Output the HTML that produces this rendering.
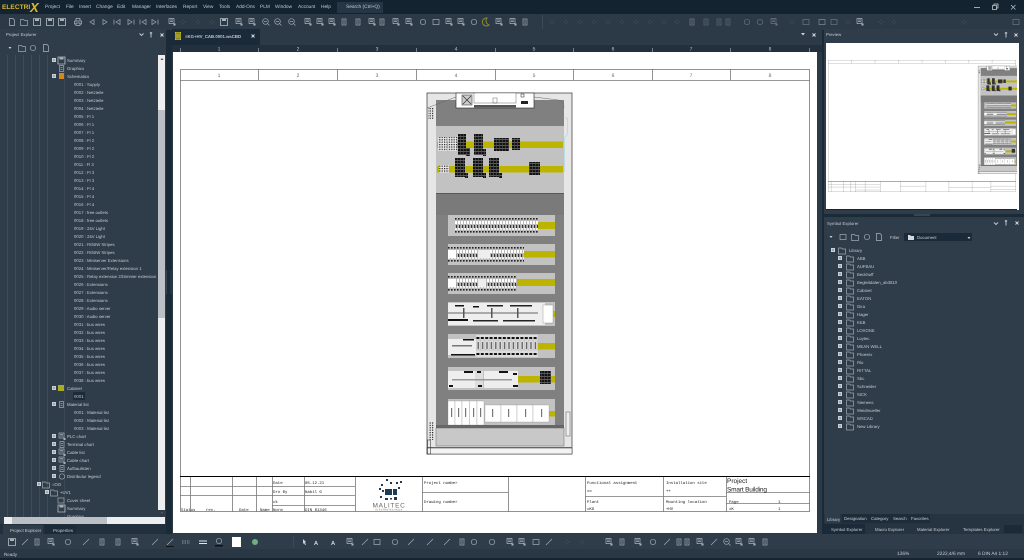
<!DOCTYPE html>
<html><head><meta charset="utf-8"><title>ELECTRIX</title>
<style>
html,body{margin:0;padding:0;width:1024px;height:560px;overflow:hidden;background:#1b2a37}
body{position:relative;font-family:"Liberation Sans",sans-serif;color:#c2c9d0;text-rendering:geometricPrecision}
.a{position:absolute}
.r{position:absolute;white-space:nowrap;font-size:4.3px;line-height:8px;height:8px;margin-top:1px}
.m{position:absolute;white-space:nowrap;font-size:4.8px;line-height:8px;height:8px;color:#c2c9d0;margin-top:1px}
.col{margin-top:1px}
.col div{white-space:nowrap;height:8px;line-height:8px;font-size:4.25px}
svg{position:absolute;left:0;top:0}
.tb text{font-family:"Liberation Mono",monospace;font-size:4px;fill:#222}
</style></head>
<body>
<div class="a" style="left:0;top:0;width:1024px;height:14px;background:#13232f"></div>
<div class="a" style="left:0;top:14px;width:1024px;height:16px;background:#2c3a47"></div>
<div class="a" style="left:0;top:29px;width:166px;height:505px;background:#2f3c49"></div>
<div class="a" style="left:172px;top:29px;width:650px;height:16px;background:#2c3a47"></div>
<div class="a" style="left:172px;top:29px;width:88px;height:16px;background:#1a2a38"></div>
<div class="a" style="left:172px;top:45px;width:650px;height:7px;background:#22303d"></div>
<div class="a" style="left:172px;top:52px;width:650px;height:482px;background:#2c3a47"></div>
<div class="a" style="left:173px;top:52px;width:644px;height:481px;background:#fff"></div>
<div class="a" style="left:824px;top:29px;width:200px;height:185px;background:#2f3c49"></div>
<div class="a" style="left:826px;top:43px;width:193px;height:167px;background:#fff"></div>
<div class="a" style="left:824px;top:217px;width:200px;height:297px;background:#2f3c49"></div>
<div class="a" style="left:824px;top:514px;width:200px;height:20px;background:#263441"></div>
<div class="a" style="left:0;top:534px;width:1024px;height:15px;background:#2f3d4b"></div>
<div class="a" style="left:0;top:549px;width:1024px;height:9px;background:#2a3846"></div>
<div class="a" style="left:0;top:558px;width:1024px;height:2px;background:#15242f"></div>

<div class="a" style="left:2px;top:0;height:14px;font:bold 6.6px/15px 'Liberation Sans',sans-serif;color:#d8b62c;white-space:nowrap">ELECTRI</div>
<div class="a" style="left:30px;top:0;font:italic bold 13px/15px 'Liberation Sans',sans-serif;color:#e2b52a">X</div>

<div class="m" style="left:45px;top:3px">Project</div><div class="m" style="left:66px;top:3px">File</div><div class="m" style="left:79px;top:3px">Insert</div><div class="m" style="left:96px;top:3px">Change</div><div class="m" style="left:117px;top:3px">Edit</div><div class="m" style="left:132px;top:3px">Manager</div><div class="m" style="left:156px;top:3px">Interfaces</div><div class="m" style="left:183px;top:3px">Report</div><div class="m" style="left:203px;top:3px">View</div><div class="m" style="left:219px;top:3px">Tools</div><div class="m" style="left:236px;top:3px">Add-Ons</div><div class="m" style="left:260px;top:3px">PLM</div><div class="m" style="left:275px;top:3px">Window</div><div class="m" style="left:298px;top:3px">Account</div><div class="m" style="left:321px;top:3px">Help</div>
<div class="a" style="left:337px;top:2px;width:46px;height:11px;background:#263644"></div>
<div class="m" style="left:346px;top:3px">Search (Ctrl+Q)</div>

<div class="m" style="left:6px;top:30px;font-size:4.3px">Project Explorer</div>
<div class="m" style="left:826px;top:30px;font-size:4.3px">Preview</div>
<div class="m" style="left:827px;top:219px;font-size:4.3px">Symbol Explorer</div>
<div class="m" style="left:185px;top:32px;font-weight:bold;font-size:4.3px">=KG+HV_CAB.0001.wsCBD</div>

<div class="a" style="left:7px;top:55px;width:1px;height:462px;background:#3e4b58;box-shadow:8px 0 #3e4b58,16px 0 #3e4b58,24px 0 #3e4b58,32px 0 #3e4b58,40px 0 #3e4b58,57px 0 #3a4754"></div>
<div class="a" style="left:73px;top:392px;width:12px;height:8px;background:#1d2b38"></div>

<div class="r" style="left:67px;top:56px">Summary</div>
<div class="r" style="left:67px;top:64px">Graphics</div>
<div class="r" style="left:67px;top:72px">Schematics</div>
<div class="col a" style="left:74px;top:80px">
<div>0001 : Supply</div><div>0002 : Netzteile</div><div>0003 : Netzteile</div><div>0004 : Netzteile</div><div>0005 : Fl 1</div><div>0006 : Fl 1</div><div>0007 : Fl 1</div><div>0008 : Fl 2</div><div>0009 : Fl 2</div><div>0010 : Fl 2</div><div>0011 : Fl 3</div><div>0012 : Fl 3</div><div>0013 : Fl 3</div><div>0014 : Fl 4</div><div>0015 : Fl 4</div><div>0016 : Fl 4</div><div>0017 : free outlets</div><div>0018 : free outlets</div><div>0019 : 24V Light</div><div>0020 : 24V Light</div><div>0021 : RGBW Stripes</div><div>0022 : RGBW Stripes</div><div>0023 : Miniserver Extensions</div><div>0024 : Miniserver/Relay extension 1</div><div>0025 : Relay extension 2/Dimmer extension</div><div>0026 : Extensions</div><div>0027 : Extensions</div><div>0028 : Extensions</div><div>0029 : Audio server</div><div>0030 : Audio server</div><div>0031 : bus wires</div><div>0032 : bus wires</div><div>0033 : bus wires</div><div>0034 : bus wires</div><div>0035 : bus wires</div><div>0036 : bus wires</div><div>0037 : bus wires</div><div>0038 : bus wires</div>
</div>
<div class="r" style="left:67px;top:384px">Cabinet</div>
<div class="r" style="left:74px;top:392px">0001</div>
<div class="r" style="left:67px;top:400px">Material list</div>
<div class="r" style="left:74px;top:408px">0001 : Material list</div>
<div class="r" style="left:74px;top:416px">0002 : Material list</div>
<div class="r" style="left:74px;top:424px">0003 : Material list</div>
<div class="r" style="left:67px;top:432px">PLC chart</div>
<div class="r" style="left:67px;top:440px">Terminal chart</div>
<div class="r" style="left:67px;top:448px">Cable list</div>
<div class="r" style="left:67px;top:456px">Cable chart</div>
<div class="r" style="left:67px;top:464px">Aufbaulisten</div>
<div class="r" style="left:67px;top:472px">Distributor legend</div>
<div class="r" style="left:52px;top:480px">=OG</div>
<div class="r" style="left:60px;top:488px">+UV1</div>
<div class="r" style="left:67px;top:496px">Cover sheet</div>
<div class="r" style="left:67px;top:504px">Summary</div>
<div class="r" style="left:67px;top:512px">Graphics</div>

<div class="a" style="left:158px;top:55px;width:7px;height:469px;background:#eceeef"></div>
<div class="a" style="left:158px;top:110px;width:7px;height:208px;background:#bcc0c4"></div>
<div class="a" style="left:4px;top:517px;width:161px;height:7px;background:#eceeef"></div>
<div class="a" style="left:12px;top:517px;width:95px;height:7px;background:#bcc0c4"></div>
<div class="a" style="left:158px;top:510px;width:7px;height:7px;background:#2f3c49"></div>
<div class="a" style="left:0;top:524px;width:166px;height:10px;background:#22303d"></div>
<div class="a" style="left:3px;top:525px;width:40px;height:9px;background:#2f3c49"></div>
<div class="a" style="left:45px;top:525px;width:31px;height:9px;background:#1c2b38"></div>
<div class="r" style="left:10px;top:526px;font-size:4.4px">Project Explorer</div>
<div class="r" style="left:53px;top:526px;font-size:4.4px">Properties</div>

<div class="col a" style="left:857px;top:254px">
<div>ABB</div><div>AUFBAU</div><div>Beckhoff</div><div>Begleitdaten_ab3810</div><div>Cabinet</div><div>EATON</div><div>Gira</div><div>Hager</div><div>KEB</div><div>LOXONE</div><div>Loytec</div><div>MEAN WELL</div><div>Phoenix</div><div>Rlo</div><div>RITTAL</div><div>Sbc</div><div>Schneider</div><div>SICK</div><div>Siemens</div><div>Weidmueller</div><div>WSCAD</div><div>New Library</div>
</div>
<div class="r" style="left:849px;top:246px">Library</div>
<div class="r" style="left:890px;top:233px">Filter</div>
<div class="a" style="left:904px;top:233px;width:68px;height:8px;background:#1b2a38"></div>
<div class="r" style="left:917px;top:233px">Document</div>

<div class="a" style="left:825px;top:514px;width:15px;height:9px;background:#2f3c49"></div>
<div class="a" style="left:842px;top:514px;width:88px;height:9px;background:#1d2c39"></div>
<div class="r" style="left:827px;top:515px">Library</div>
<div class="r" style="left:844px;top:514px">Designation</div>
<div class="r" style="left:871px;top:514px">Category</div>
<div class="r" style="left:893px;top:514px">Search</div>
<div class="r" style="left:911px;top:514px">Favorites</div>
<div class="a" style="left:824px;top:524px;width:41px;height:10px;background:#1b2a38"></div>
<div class="a" style="left:1004px;top:525px;width:18px;height:8px;background:#1b2a38"></div>
<div class="r" style="left:831px;top:525px">Symbol Explorer</div>
<div class="r" style="left:875px;top:525px">Macro Explorer</div>
<div class="r" style="left:917px;top:525px">Material Explorer</div>
<div class="r" style="left:963px;top:525px">Templates Explorer</div>

<div class="r" style="left:4px;top:550px;font-size:4.5px">Ready</div>
<div class="r" style="left:897px;top:550px;font-size:4.8px">136%</div>
<div class="r" style="left:937px;top:550px;font-size:4.8px">2222,4/6 mm</div>
<div class="r" style="left:978px;top:550px;font-size:4.8px">6 DIN A4 1:12</div>

<svg width="1024" height="560" viewBox="0 0 1024 560">
<defs>
<symbol id="d" viewBox="0 0 8 8" width="8" height="8"><path d="M1.500.5h3.500l1.500 1.500v5.500h-5z" fill="none" stroke="#aeb7be" stroke-width=".7"/></symbol>
<symbol id="f" viewBox="0 0 8 8" width="8" height="8"><path d="M.5 1.500h3l1 1h3v5h-7z" fill="none" stroke="#9fa9b1" stroke-width=".7"/></symbol>
<symbol id="s" viewBox="0 0 8 8" width="8" height="8"><path d="M.5.5h7v7h-7z" fill="none" stroke="#b5bdc4" stroke-width=".8"/><path d="M2 1h4v2H2z" fill="#a9b2b9"/></symbol>
<symbol id="p" viewBox="0 0 8 8" width="8" height="8"><path d="M2 3V.5h4V3M.5 3h7v3H6M2 6H.5V3M2 5h4v2.500H2z" fill="none" stroke="#aeb7be" stroke-width=".7"/></symbol>
<symbol id="l" viewBox="0 0 8 8" width="8" height="8"><path d="M6 1.500L2 4l4 2.500z" fill="none" stroke="#a3acb4" stroke-width=".7"/></symbol>
<symbol id="g" viewBox="0 0 8 8" width="8" height="8"><path d="M2 1.500L6 4 2 6.500z" fill="none" stroke="#a3acb4" stroke-width=".7"/></symbol>
<symbol id="b" viewBox="0 0 8 8" width="8" height="8"><path d="M1 1.500v5M7 1.500L3 4l4 2.500z" fill="none" stroke="#a3acb4" stroke-width=".7"/></symbol>
<symbol id="c" viewBox="0 0 8 8" width="8" height="8"><path d="M7 1.500v5M1 1.500L5 4 1 6.500z" fill="none" stroke="#a3acb4" stroke-width=".7"/></symbol>
<symbol id="z" viewBox="0 0 8 8" width="8" height="8"><circle cx="3.500" cy="3.500" r="2.800" fill="none" stroke="#9fa9b1" stroke-width=".7"/><path d="M5.500 5.500l2 2M2 3.500h3" stroke="#9fa9b1" stroke-width=".7"/></symbol>
<symbol id="r" viewBox="0 0 8 8" width="8" height="8"><path d="M1 .5h5v5H1zM2 2h3M2 3.500h3" fill="none" stroke="#a9b2b9" stroke-width=".7"/><path d="M5.500 5.500h2v2h-2z" fill="#a9b2b9"/></symbol>
<symbol id="i" viewBox="0 0 8 8" width="8" height="8"><path d="M2 1h4v6H2zM3 3h2M3 5h2" fill="none" stroke="#9fa9b1" stroke-width=".7"/></symbol>
<symbol id="h" viewBox="0 0 8 8" width="8" height="8"><path d="M1.500 4h1.500M5 4h1.500M4 1.500V3M4 5v1.500" stroke="#47545f" stroke-width=".7"/></symbol>
<symbol id="e" viewBox="0 0 8 8" width="8" height="8"><path d="M1 1.500h6v5H1z" fill="none" stroke="#9fa9b1" stroke-width=".7"/></symbol>
<symbol id="o" viewBox="0 0 8 8" width="8" height="8"><circle cx="4" cy="4" r="2.700" fill="none" stroke="#9fa9b1" stroke-width=".7"/></symbol>
<symbol id="n" viewBox="0 0 8 8" width="8" height="8"><path d="M1 7L7 1" stroke="#9fa9b1" stroke-width=".7"/></symbol>
<symbol id="x" viewBox="0 0 4 4" width="4" height="4"><rect width="4" height="4" fill="#c9cfd4"/><path d="M1 2h2" stroke="#3a4754" stroke-width=".6"/></symbol>
<symbol id="X" viewBox="0 0 4 4" width="4" height="4"><path d="M.5.5l3 3M3.500.5l-3 3" stroke="#d8dde1" stroke-width=".9"/></symbol>
<pattern id="blk" width="3" height="3" patternUnits="userSpaceOnUse"><rect width="3" height="3" fill="#111"/><rect y="1" width="3" height=".7" fill="#777"/><rect x="1" width=".6" height="3" fill="#555"/></pattern>
<pattern id="chk" width="2.400" height="2.400" patternUnits="userSpaceOnUse"><rect width="2.400" height="2.400" fill="#e8e8e8"/><rect width="1.200" height="1.200" fill="#222"/></pattern>
<pattern id="tm" width="3" height="15" patternUnits="userSpaceOnUse"><rect width="3" height="15" fill="#bbb"/><rect width="1.600" height="1.600" fill="#222"/><rect y="13" width="1.600" height="1.600" fill="#222"/><rect y="3" x="0" width="2" height="3" fill="#fff"/><rect y="7" x="1" width="1.200" height="3" fill="#333"/><rect y="10" x="0" width="2" height="2" fill="#eee"/></pattern>
<pattern id="mod" width="4.400" height="24" patternUnits="userSpaceOnUse"><rect width="4.400" height="24" fill="#ddd"/><rect x=".4" y="2" width="3" height="2" fill="#111"/><rect x=".4" y="18" width="3" height="2" fill="#111"/><rect x="1.600" y="7" width="1.200" height="7" fill="#555"/><rect y="5" width="4.400" height="10" fill="none" stroke="#999" stroke-width=".3"/></pattern>

<g id="cab">
<rect x="427" y="93" width="145" height="361" fill="#e6e6e6" stroke="#333" stroke-width=".7"/>
<rect x="436" y="100" width="128" height="328" fill="#808080"/>
<path d="M427 108L456 97M534 97l24 3q6 1 6 8" fill="none" stroke="#666" stroke-width=".5"/>
<rect x="436" y="126" width="128" height="67" fill="#c2c2c2"/>
<rect x="436" y="193" width="128" height="22" fill="#7a7a7a"/>
<rect x="436" y="193" width="128" height=".6" fill="#444"/>
<rect x="437" y="141.500" width="126" height="6.500" fill="#bdb400"/>
<rect x="437" y="166" width="126" height="6.500" fill="#bdb400"/>
<rect x="456" y="93" width="78" height="15" fill="#fff" stroke="#222" stroke-width=".6"/>
<rect x="474" y="93" width="42" height="10" fill="#fff" stroke="#444" stroke-width=".4"/>
<rect x="474" y="105" width="42" height="2.500" fill="#555"/>
<rect x="462" y="95" width="10" height="10" fill="#ccc" stroke="#222" stroke-width=".5"/>
<path d="M463 96l8 8M471 96l-8 8" stroke="#222" stroke-width=".6"/>
<rect x="521" y="94" width="3" height="3" fill="none" stroke="#222" stroke-width=".5"/>
<rect x="521" y="101" width="7" height="3" fill="#222"/>
<rect x="493" y="98" width="4" height="5" fill="none" stroke="#444" stroke-width=".4"/>
<rect x="428" y="108" width="6" height="11" fill="url(#chk)"/>
<path d="M563.500 118h4v16l-3 4v34" fill="none" stroke="#9fd8df" stroke-width=".6"/>
<rect x="438" y="137" width="9" height="14" fill="url(#chk)"/>
<rect x="448" y="137" width="9" height="14" fill="url(#chk)"/>
<rect x="458" y="134" width="8" height="21" fill="url(#blk)"/>
<rect x="466" y="148" width="4" height="8" fill="url(#blk)"/>
<rect x="474" y="134" width="9" height="21" fill="url(#blk)"/>
<rect x="483" y="149" width="3" height="7" fill="url(#blk)"/>
<rect x="494" y="138" width="15" height="13" fill="url(#blk)"/>
<rect x="512" y="138" width="8" height="12" fill="url(#blk)"/>
<rect x="439" y="165" width="10" height="8" fill="url(#chk)"/>
<rect x="455" y="158" width="10" height="19" fill="url(#blk)"/>
<rect x="465" y="173" width="3" height="5" fill="url(#blk)"/>
<rect x="473" y="158" width="10" height="19" fill="url(#blk)"/>
<rect x="483" y="173" width="3" height="5" fill="url(#blk)"/>
<rect x="489" y="158" width="10" height="19" fill="url(#blk)"/>
<rect x="499" y="173" width="3" height="5" fill="url(#blk)"/>
<rect x="529" y="162" width="11" height="13" fill="url(#blk)"/>

<rect x="448" y="215" width="107" height="21" fill="#c2c2c2"/>
<rect x="448" y="244" width="107" height="21" fill="#c2c2c2"/>
<rect x="448" y="273" width="107" height="21" fill="#c2c2c2"/>
<rect x="448" y="302" width="107" height="24" fill="#c2c2c2"/>
<rect x="448" y="334" width="107" height="24" fill="#c2c2c2"/>
<rect x="448" y="367" width="107" height="23" fill="#c2c2c2"/>
<rect x="448" y="399" width="107" height="26" fill="#c2c2c2"/>
<rect x="538" y="222" width="17" height="7" fill="#bdb400"/>
<rect x="523" y="251" width="32" height="6.500" fill="#bdb400"/>
<rect x="517" y="279" width="38" height="7" fill="#bdb400"/>
<rect x="538" y="343" width="17" height="6.500" fill="#bdb400"/>
<rect x="518" y="376" width="37" height="6.500" fill="#bdb400"/>
<rect x="549" y="411" width="6" height="5.500" fill="#bdb400"/>
<g transform="translate(455 218)"><rect width="83" height="15" fill="url(#tm)"/></g>
<g transform="translate(448 247)"><rect width="76" height="15" fill="url(#tm)"/><rect x="0" y="3" width="8" height="8" fill="#fff"/><rect x="30" y="3" width="12" height="8" fill="#eee"/></g>
<g transform="translate(448 276)"><rect width="69" height="15" fill="url(#tm)"/><rect x="0" y="3" width="8" height="8" fill="#fff"/><rect x="30" y="3" width="8" height="8" fill="#eee"/></g>
<rect x="448" y="303" width="97" height="22" fill="#eee"/>
<rect x="455" y="305" width="9" height="1.500" fill="#111"/><rect x="473" y="306" width="6" height="1.500" fill="#111"/><rect x="487" y="305" width="16" height="1.500" fill="#222"/><rect x="510" y="305" width="22" height="1.500" fill="#222"/>
<rect x="448" y="319" width="20" height="2" fill="#111"/><rect x="473" y="320" width="25" height="1.500" fill="#222"/><rect x="503" y="320" width="32" height="1.500" fill="#222"/>
<rect x="448" y="312" width="90" height="2" fill="#aaa"/>
<rect x="463" y="308" width="1.500" height="10" fill="#555"/><rect x="491" y="308" width="1.500" height="10" fill="#555"/><rect x="517" y="308" width="1.500" height="10" fill="#555"/>
<rect x="543" y="305" width="10" height="18" fill="#fff" stroke="#888" stroke-width=".4"/>
<rect x="553" y="311" width="2" height="6" fill="#bdb400"/>
<rect x="448" y="339" width="30" height="16" fill="#eee"/>
<rect x="463" y="339" width="11" height="1.500" fill="#111"/><rect x="451" y="354" width="24" height="1.500" fill="#111"/>
<rect x="452" y="345" width="20" height="1.500" fill="#777"/>
<g transform="translate(476 335)"><rect width="62" height="22" fill="url(#mod)"/></g>
<rect x="448" y="371" width="27" height="17" fill="#eee"/><rect x="484" y="371" width="28" height="17" fill="#eee"/><rect x="475" y="371" width="8" height="17" fill="#ddd"/><rect x="512" y="371" width="6" height="17" fill="#eee"/>
<rect x="464" y="371" width="9" height="2" fill="#111"/><rect x="477" y="371" width="4" height="2" fill="#111"/><rect x="499" y="371" width="9" height="2" fill="#111"/><rect x="513" y="373" width="4" height="2" fill="#111"/>
<rect x="449" y="385" width="4" height="2" fill="#111"/><rect x="478" y="385" width="4" height="2" fill="#111"/><rect x="513" y="385" width="5" height="2" fill="#111"/>
<rect x="452" y="379" width="60" height="1.500" fill="#999"/>
<rect x="540" y="371" width="11" height="13" fill="url(#blk)"/>
<g fill="#fff" stroke="#888" stroke-width=".3"><rect x="448" y="401" width="7" height="24"/><rect x="455" y="401" width="7" height="24"/><rect x="462" y="401" width="7.500" height="24"/><rect x="469.500" y="401" width="7.500" height="24"/><rect x="477" y="401" width="7" height="24"/><rect x="485" y="405" width="16" height="17"/><rect x="501" y="405" width="16" height="17"/><rect x="517" y="405" width="16" height="17"/><rect x="533" y="405" width="16" height="17"/></g>
<g fill="#777"><rect x="451" y="408" width="1.200" height="9"/><rect x="458" y="408" width="1.200" height="9"/><rect x="465" y="408" width="1.200" height="9"/><rect x="473" y="408" width="1.200" height="9"/><rect x="480" y="408" width="1.200" height="9"/><rect x="492" y="409" width="1.200" height="8"/><rect x="508" y="409" width="1.200" height="8"/><rect x="525" y="409" width="1.200" height="8"/><rect x="541" y="409" width="1.200" height="8"/></g>
<rect x="436" y="425" width="128" height="3" fill="#666"/>
<rect x="436" y="428" width="128" height="18" fill="#c8c8c8" stroke="#666" stroke-width=".5"/>
<rect x="427" y="447" width="145" height="1" fill="#777"/>
<rect x="427" y="448" width="145" height="6" fill="#f3f3f3" stroke="#333" stroke-width=".5"/>
<rect x="429" y="422" width="5" height="18" fill="url(#chk)"/>
<rect x="566" y="412" width="4" height="24" fill="#eee" stroke="#555" stroke-width=".5"/>
<rect x="427.500" y="440" width="3" height="14" fill="none" stroke="#222" stroke-width=".5"/>
</g>

<g id="frame" fill="none" stroke="#777" stroke-width=".8">
<rect x="180.500" y="69.500" width="629" height="442"/>
<path d="M180 80.500h630M258.500 69v11M337.500 69v11M416.500 69v11M495.500 69v11M573.500 69v11M652.500 69v11M730.500 69v11"/>
<path d="M190.500 477v35M232.500 477v35M256.500 477v35M272.500 477v35M304.500 477v35M355.500 477v35M422.500 477v35M508.500 477v35M585.500 477v35M663.500 477v35M726.500 477v35"/>
<path d="M180 486.500h92M180 495.500h92M272 486.500h83M272 495.500h83M272 505.500h83M422 492.500h86M585 496.500h141M726 492.500h84M726 503.500h84"/>
<path d="M180 476.500h630" stroke="#000" stroke-width="1.100"/>
</g>
</defs>

<use href="#cab"/>
<use href="#frame"/>

<g font-family="'Liberation Sans',sans-serif" font-size="5" fill="#666" text-anchor="middle">
<text x="219" y="77">1</text><text x="298" y="77">2</text><text x="377" y="77">3</text><text x="456" y="77">4</text><text x="534" y="77">5</text><text x="613" y="77">6</text><text x="691" y="77">7</text><text x="770" y="77">8</text>
</g>
<g font-family="'Liberation Sans',sans-serif" font-size="5" fill="#c0c8ce" text-anchor="middle">
<text x="219" y="50.500">1</text><text x="298" y="50.500">2</text><text x="377" y="50.500">3</text><text x="456" y="50.500">4</text><text x="534" y="50.500">5</text><text x="613" y="50.500">6</text><text x="691" y="50.500">7</text><text x="770" y="50.500">8</text>
</g>
<path d="M180.500 48v4M258.500 48v4M337.500 48v4M416.500 48v4M495.500 48v4M573.500 48v4M652.500 48v4M730.500 48v4M809.500 48v4" stroke="#9aa3ab" stroke-width=".7"/>

<g class="tb">
<text x="181" y="511">Status</text><text x="206" y="511">rev.</text><text x="239" y="511">Date</text><text x="260" y="511">Name</text>
<text x="273" y="484">Date</text><text x="305" y="484">05.12.21</text>
<text x="273" y="493">Drn By</text><text x="305" y="493">Nabil G</text>
<text x="273" y="503">ck</text><text x="273" y="511">Norm</text><text x="305" y="511">DIN 81346</text>
<text x="424" y="484">Project number</text><text x="424" y="503">Drawing number</text>
<text x="587" y="484">Functional assignment</text><text x="587" y="492">==</text>
<text x="587" y="503">Plant</text><text x="587" y="510">=KG</text>
<text x="666" y="484">Installation site</text><text x="666" y="492">++</text>
<text x="666" y="503">Mounting location</text><text x="666" y="510">+HV</text>
<text x="729" y="503">Page</text><text x="778" y="503">1</text><text x="729" y="510">=K</text><text x="778" y="510">1</text>
</g>
<text x="727" y="483" font-family="'Liberation Sans',sans-serif" font-size="6.500" fill="#222">Project</text>
<text x="727" y="491.500" font-family="'Liberation Sans',sans-serif" font-size="6.500" fill="#222" textLength="40">Smart Building</text>

<g fill="#1d3b52">
<rect x="385" y="489" width="7" height="6"/><rect x="393" y="489" width="4" height="6"/>
<rect x="386" y="479" width="2" height="2"/><rect x="381" y="484" width="2" height="2"/><rect x="390" y="482" width="2" height="2"/><rect x="396" y="482" width="2" height="2"/><rect x="400" y="481" width="2" height="2"/>
<rect x="379" y="488" width="2" height="2"/><rect x="382" y="490" width="2" height="2"/><rect x="398" y="487" width="2" height="2"/><rect x="380" y="496" width="2" height="2"/><rect x="385" y="498" width="3" height="2"/><rect x="394" y="497" width="3" height="3"/><rect x="390" y="498" width="2" height="1.500"/>
</g>
<text x="389" y="507.500" text-anchor="middle" font-family="'Liberation Sans',sans-serif" font-size="6.500" fill="#666" letter-spacing=".7">MALITEC</text>
<text x="389" y="510.500" text-anchor="middle" font-family="'Liberation Sans',sans-serif" font-size="2.300" fill="#666" letter-spacing=".3">ELECTROTECHNICS</text>

<!-- preview -->
<svg x="826" y="43" width="191" height="167" viewBox="826 43 191 167">
<g transform="translate(774.400 39.400) scale(.298)"><use href="#frame"/></g>
<g transform="translate(850.800 38.300) scale(.298)"><use href="#cab"/></g>
<rect x="825" y="209" width="193" height="1" fill="#222"/>
</svg>

<!-- window controls -->
<path d="M974 7.500h6" stroke="#c4cbd1" stroke-width=".8"/>
<path d="M992.500 5.500h4v4h-4zM994 5.500v-1.500h4v4h-1.500" fill="none" stroke="#c4cbd1" stroke-width=".8"/>
<path d="M1011 5l4.500 4.500M1015.500 5l-4.500 4.500" stroke="#c4cbd1" stroke-width=".7"/>

<!-- panel header controls -->
<g fill="none" stroke="#ccd2d7" stroke-width=".9">
<path d="M139.500 33.500l2 2 2-2"/>
<path d="M994 33.500l2 2 2-2"/>
<path d="M994 222.500l2 2 2-2"/>
</g>
<use href="#X" x="160" y="33"/><use href="#X" x="1014" y="33"/><use href="#X" x="1015" y="221"/><use href="#X" x="812" y="33"/><use href="#X" x="251" y="34"/>
<path d="M151 32v3.500M149.800 33h2.400M151 35.500v2M1006 32v3.500M1004.800 33h2.400M1006 35.500v2M1006 220v3.500M1004.800 221h2.400M1006 223.500v2" stroke="#ccd2d7" stroke-width=".9"/>
<path d="M801 33h4l-2 2.500z" fill="#ccd2d7"/>
<rect x="175" y="32" width="6" height="8" fill="#c9c31c"/><path d="M176 33h4v6h-4zM178 33v6" fill="none" stroke="#333" stroke-width=".5"/>

<!-- top toolbar -->
<use href="#d" x="8" y="18"/><use href="#f" x="20" y="18"/><use href="#s" x="33" y="18"/><use href="#s" x="46" y="18"/><use href="#s" x="58" y="18"/><use href="#p" x="74" y="18"/><use href="#l" x="88" y="18"/><use href="#g" x="101" y="18"/><use href="#b" x="113" y="18"/><use href="#c" x="127" y="18"/><use href="#b" x="139" y="18"/><use href="#c" x="151" y="18"/><use href="#r" x="168" y="18"/><use href="#h" x="179" y="18"/><use href="#h" x="194" y="18"/><use href="#h" x="208" y="18"/><use href="#s" x="220" y="18"/><use href="#r" x="235" y="18"/><use href="#r" x="248" y="18"/><use href="#z" x="262" y="18"/><use href="#z" x="274" y="18"/><use href="#z" x="288" y="18"/><use href="#r" x="304" y="18"/><use href="#r" x="316" y="18"/><use href="#r" x="328" y="18"/>
<use href="#i" x="340" y="18"/><use href="#i" x="354" y="18"/><use href="#r" x="368" y="18"/><use href="#i" x="378" y="18"/><use href="#r" x="392" y="18"/><use href="#r" x="405" y="18"/><use href="#o" x="419" y="18"/><use href="#e" x="432" y="18"/><use href="#r" x="445" y="18"/><use href="#r" x="457" y="18"/><use href="#o" x="470" y="18"/>
<path d="M487 18a4 4 0 1 0 2 7a4.500 4.500 0 0 1-2-7z" fill="none" stroke="#8c8a2e" stroke-width="1"/>
<use href="#r" x="495" y="18"/><use href="#r" x="509" y="18"/><use href="#i" x="521" y="18"/>
<path d="M542.500 15v14" stroke="#3c4a57"/>
<use href="#h" x="548" y="18"/><use href="#h" x="562" y="18"/><use href="#h" x="576" y="18"/><use href="#h" x="590" y="18"/><use href="#h" x="604" y="18"/><use href="#h" x="618" y="18"/><use href="#h" x="632" y="18"/><use href="#h" x="646" y="18"/><use href="#h" x="660" y="18"/><use href="#h" x="673" y="18"/>
<use href="#i" x="688" y="18" opacity=".6"/><use href="#i" x="702" y="18" opacity=".4"/><use href="#i" x="715" y="18" opacity=".4"/><use href="#i" x="724" y="18" opacity=".4"/><use href="#o" x="743" y="18" opacity=".5"/><use href="#o" x="756" y="18" opacity=".5"/><use href="#r" x="770" y="18" opacity=".5"/><use href="#h" x="788" y="18"/><use href="#e" x="802" y="18" opacity=".5"/><use href="#e" x="818" y="18" opacity=".7"/><use href="#e" x="830" y="18" opacity=".5"/><use href="#h" x="844" y="18"/><use href="#r" x="856" y="18"/><use href="#h" x="877" y="18"/><use href="#h" x="890" y="18"/><use href="#h" x="960" y="18"/><use href="#e" x="1012" y="18" opacity=".5"/>

<!-- left toolbar -->
<path d="M8.500 47h3l-1.500 2z" fill="#ccd2d7"/><use href="#f" x="18" y="44"/><use href="#o" x="29" y="44"/><use href="#d" x="42" y="44"/>
<!-- right toolbar -->
<path d="M829.500 236h3l-1.500 2z" fill="#ccd2d7"/><use href="#e" x="839" y="233"/><use href="#f" x="851" y="233"/><use href="#o" x="863" y="233"/><use href="#d" x="875" y="233"/>
<path d="M908 235h2l1 1h3v4h-6z" fill="#d4d9dd"/><path d="M967.500 237h3l-1.500 2z" fill="#ccd2d7"/>

<!-- left tree icons -->
<use href="#x" x="52" y="58"/><use href="#s" x="57.500" y="56.500"/><use href="#i" x="57.500" y="64.500"/>
<use href="#x" x="52" y="74"/><rect x="59" y="73" width="5" height="6" fill="#d8861d"/>
<use href="#x" x="52" y="386"/><rect x="58" y="385" width="6" height="6" fill="#a8ae24"/>
<use href="#x" x="52" y="402"/><use href="#i" x="57.500" y="400.500"/>
<use href="#x" x="52" y="434"/><use href="#r" x="58" y="432.500"/>
<use href="#x" x="52" y="442"/><use href="#i" x="58" y="440.500"/>
<use href="#x" x="52" y="450"/><use href="#r" x="58" y="448.500"/>
<use href="#x" x="52" y="458"/><use href="#r" x="58" y="456.500"/>
<use href="#x" x="52" y="466"/><use href="#i" x="58" y="464.500"/>
<use href="#x" x="52" y="474"/><use href="#o" x="58" y="472.500"/>
<use href="#x" x="37" y="482"/><use href="#f" x="42" y="480.500"/>
<use href="#x" x="45" y="490"/><use href="#f" x="50" y="488.500"/>
<use href="#e" x="57" y="496.500"/><use href="#s" x="57.500" y="504.500"/>

<!-- right tree icons -->
<use href="#x" x="831" y="248"/><use href="#f" x="838" y="246.500"/>
<g>
<use href="#x" x="838" y="256"/><use href="#f" x="846" y="254.500"/>
<use href="#x" x="838" y="264"/><use href="#f" x="846" y="262.500"/>
<use href="#x" x="838" y="272"/><use href="#f" x="846" y="270.500"/>
<use href="#x" x="838" y="280"/><use href="#f" x="846" y="278.500"/>
<use href="#x" x="838" y="288"/><use href="#f" x="846" y="286.500"/>
<use href="#x" x="838" y="296"/><use href="#f" x="846" y="294.500"/>
<use href="#x" x="838" y="304"/><use href="#f" x="846" y="302.500"/>
<use href="#x" x="838" y="312"/><use href="#f" x="846" y="310.500"/>
<use href="#x" x="838" y="320"/><use href="#f" x="846" y="318.500"/>
<use href="#x" x="838" y="328"/><use href="#f" x="846" y="326.500"/>
<use href="#x" x="838" y="336"/><use href="#f" x="846" y="334.500"/>
<use href="#x" x="838" y="344"/><use href="#f" x="846" y="342.500"/>
<use href="#x" x="838" y="352"/><use href="#f" x="846" y="350.500"/>
<use href="#x" x="838" y="360"/><use href="#f" x="846" y="358.500"/>
<use href="#x" x="838" y="368"/><use href="#f" x="846" y="366.500"/>
<use href="#x" x="838" y="376"/><use href="#f" x="846" y="374.500"/>
<use href="#x" x="838" y="384"/><use href="#f" x="846" y="382.500"/>
<use href="#x" x="838" y="392"/><use href="#f" x="846" y="390.500"/>
<use href="#x" x="838" y="400"/><use href="#f" x="846" y="398.500"/>
<use href="#x" x="838" y="408"/><use href="#f" x="846" y="406.500"/>
<use href="#x" x="838" y="416"/><use href="#f" x="846" y="414.500"/>
<use href="#x" x="838" y="424"/><use href="#f" x="846" y="422.500"/>
</g>

<!-- bottom toolbar -->
<use href="#s" x="8" y="538"/><use href="#n" x="21" y="538"/><use href="#i" x="33" y="538"/><use href="#r" x="47" y="538"/><use href="#o" x="64" y="538"/><use href="#n" x="82" y="538"/><use href="#i" x="98" y="538"/><use href="#i" x="114" y="538"/><use href="#r" x="131" y="538"/><use href="#n" x="151" y="538"/><use href="#n" x="166" y="538"/>
<rect x="166" y="546" width="8" height="1" fill="#111"/>
<path d="M182 541h8M182 543h8" stroke="#aeb7be" stroke-width=".7" stroke-dasharray="1.500 1"/><path d="M199 541h8M199 543.500h8" stroke="#e2e6e9" stroke-width="1.100"/>
<use href="#o" x="215" y="537"/><rect x="215" y="545" width="8" height="1.500" fill="#111"/>
<rect x="232" y="537" width="9" height="10" fill="#fff"/>
<circle cx="255" cy="542" r="3" fill="#6fae7d"/>
<path d="M293.500 536v11" stroke="#3c4a57"/>
<path d="M303 539l3 3-1 .5 1 2-1 .5-1-2-1 1z" fill="#ccd2d7"/>
<text x="316" y="545" font-family="'Liberation Sans',sans-serif" font-size="6" font-weight="bold" fill="#ccd2d7" text-anchor="middle">A</text>
<text x="333" y="545" font-family="'Liberation Sans',sans-serif" font-size="6" font-weight="bold" fill="#ccd2d7" text-anchor="middle">A</text>
<use href="#r" x="346" y="538"/><use href="#n" x="361" y="538"/><use href="#e" x="373" y="538"/><use href="#o" x="391" y="538"/><use href="#n" x="407" y="538"/><use href="#n" x="426" y="538"/><use href="#n" x="443" y="538"/><use href="#i" x="458" y="538"/><use href="#o" x="470" y="538"/><use href="#o" x="488" y="538"/><use href="#r" x="506" y="538"/><use href="#r" x="518" y="538"/><use href="#e" x="532" y="538"/><use href="#n" x="545" y="538"/><use href="#h" x="563" y="538"/><use href="#h" x="578" y="538"/>
<use href="#r" x="605" y="538"/><use href="#i" x="618" y="538"/><use href="#r" x="634" y="538"/><use href="#o" x="649" y="538"/><use href="#n" x="663" y="538"/><use href="#i" x="675" y="538"/><use href="#i" x="683" y="538"/><use href="#r" x="696" y="538"/><use href="#n" x="710" y="538"/><use href="#z" x="723" y="538"/><use href="#r" x="735" y="538"/><use href="#r" x="748" y="538"/><use href="#i" x="761" y="538"/>

<path d="M166.500 270v24M171 270v24" stroke="#4a5763" stroke-width=".8" opacity=".7"/>
<rect x="914" y="214.500" width="16" height="1" fill="#55626e"/>
<path d="M162 58l-1.500 2h3zM162 514l-1.500-2h3z" fill="#555"/>
</svg>
</body></html>
